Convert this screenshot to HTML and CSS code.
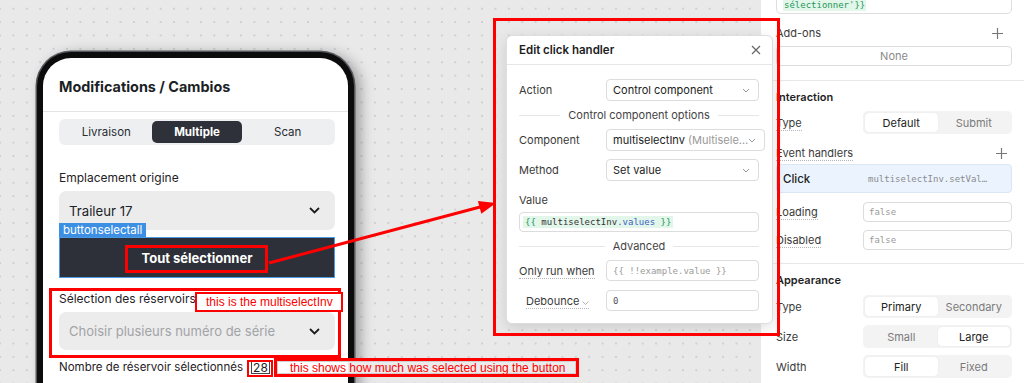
FILE: index.html
```html
<!DOCTYPE html>
<html lang="fr">
<head>
<meta charset="utf-8">
<title>Edit click handler</title>
<link rel="stylesheet" href="styles.css">
</head>
<body>
<div class="app">
  <main class="canvas">
    <div class="phone">
      <header class="app-header">Modifications / Cambios</header>
      <div class="app-body">
        <div class="seg">
          <span class="seg-item">Livraison</span>
          <span class="seg-item active">Multiple</span>
          <span class="seg-item">Scan</span>
        </div>
        <div class="field-label first">Emplacement origine</div>
        <div class="select"><span>Traileur 17</span><svg class="chev" width="11" height="7" viewBox="0 0 11 7"><path d="M1 1l4.5 4.5L10 1" fill="none" stroke="#1d1d1f" stroke-width="1.8"/></svg></div>
        <div class="btn-wrap">
          <span class="sel-tag">buttonselectall</span>
          <div class="btn-dark">Tout sélectionner</div>
        </div>
        <div class="field-label second">Sélection des réservoirs</div>
        <div class="select multi"><span>Choisir plusieurs numéro de série</span><svg class="chev" width="11" height="7" viewBox="0 0 11 7"><path d="M1 1l4.5 4.5L10 1" fill="none" stroke="#1d1d1f" stroke-width="1.8"/></svg></div>
        <div class="count-row"><span>Nombre de réservoir sélectionnés</span><span class="count">28</span></div>
      </div>
    </div>
  </main>

  <aside class="panel">
    <div class="code-box"><span class="code-hl">sélectionner'}}</span></div>
    <div class="p-head add">
      <span class="p-sub">Add-ons</span>
      <svg width="11" height="11" viewBox="0 0 11 11"><path d="M5.5 0v11M0 5.5h11" stroke="#777" stroke-width="1.2"/></svg>
    </div>
    <div class="none-box">None</div>
    <div class="p-sep"></div>
    <div class="p-title">Interaction</div>
    <div class="p-row r-type"><span class="p-label"><span class="dotted">Type</span></span><div class="p-seg"><span class="on">Default</span><span>Submit</span></div></div>
    <div class="p-head ev">
      <span class="p-label"><span class="dotted">Event handlers</span></span>
      <svg width="11" height="11" viewBox="0 0 11 11"><path d="M5.5 0v11M0 5.5h11" stroke="#777" stroke-width="1.2"/></svg>
    </div>
    <div class="handler"><span class="h-name">Click</span><span class="h-code">multiselectInv.setVal…</span></div>
    <div class="p-row r-load"><span class="p-label"><span class="dotted">Loading</span></span><div class="p-input">false</div></div>
    <div class="p-row r-dis"><span class="p-label"><span class="dotted">Disabled</span></span><div class="p-input">false</div></div>
    <div class="p-sep sep2"></div>
    <div class="p-title t2">Appearance</div>
    <div class="p-row r-seg"><span class="p-label">Type</span><div class="p-seg"><span class="on">Primary</span><span>Secondary</span></div></div>
    <div class="p-row r-seg"><span class="p-label">Size</span><div class="p-seg"><span>Small</span><span class="on">Large</span></div></div>
    <div class="p-row r-seg"><span class="p-label">Width</span><div class="p-seg"><span class="on">Fill</span><span>Fixed</span></div></div>
  </aside>

  <section class="modal">
    <header class="m-head">
      <span>Edit click handler</span>
      <svg width="10" height="10" viewBox="0 0 10 10"><path d="M1 1l8 8M9 1l-8 8" stroke="#666" stroke-width="1.2"/></svg>
    </header>
    <div class="m-body">
      <div class="m-row">
        <span class="m-label">Action</span>
        <div class="m-select"><span>Control component</span><svg width="8" height="5" viewBox="0 0 8 5"><path d="M1 1l3 3 3-3" fill="none" stroke="#9a9a9a" stroke-width="1"/></svg></div>
      </div>
      <div class="m-div"><span>Control component options</span></div>
      <div class="m-row">
        <span class="m-label">Component</span>
        <div class="m-select"><span>multiselectInv <em>(Multisele…</em></span><svg width="8" height="5" viewBox="0 0 8 5"><path d="M1 1l3 3 3-3" fill="none" stroke="#9a9a9a" stroke-width="1"/></svg></div>
      </div>
      <div class="m-row method">
        <span class="m-label">Method</span>
        <div class="m-select"><span>Set value</span><svg width="8" height="5" viewBox="0 0 8 5"><path d="M1 1l3 3 3-3" fill="none" stroke="#9a9a9a" stroke-width="1"/></svg></div>
      </div>
      <div class="m-vlabel">Value</div>
      <div class="m-code"><span class="hl"><span class="br">{{</span> multiselectInv<span class="prop">.values</span> <span class="br">}}</span></span></div>
      <div class="m-div adv"><span>Advanced</span></div>
      <div class="m-row m-small">
        <span class="m-label"><span class="dotted">Only run when</span></span>
        <div class="m-input ph">{{ !!example.value }}</div>
      </div>
      <div class="m-row m-small deb">
        <span class="m-label ind"><span class="dotted">Debounce <svg width="7" height="4" viewBox="0 0 7 4"><path d="M.5.5l3 3 3-3" fill="none" stroke="#aaa" stroke-width="0.9"/></svg></span></span>
        <div class="m-input">0</div>
      </div>
    </div>
  </section>

  <div class="anno a-modal"></div>
  <div class="anno a-btn"></div>
  <div class="anno a-multi"></div>
  <div class="anno a-count"></div>
  <div class="note n-multi">this is the multiselectInv</div>
  <div class="note n-count">this shows how much was selected using the button</div>
  <svg class="arrow" width="1024" height="383" viewBox="0 0 1024 383">
    <line x1="269" y1="263" x2="482" y2="206.5" stroke="#fe0000" stroke-width="3"/>
    <polygon points="496,203 477.9,201.1 481.3,213.7" fill="#fe0000"/>
  </svg>
</div>
</body>
</html>
```
FILE: styles.css
```css
* { box-sizing: border-box; margin: 0; padding: 0; }
html, body { width: 1024px; height: 383px; overflow: hidden; }
body { font-family: Inter, "Liberation Sans", sans-serif; background: #e9e9e9; color: #1f1f1f; }

.app { position: relative; display: flex; width: 1024px; height: 383px; overflow: hidden; }

/* canvas */
.canvas {
  position: relative; flex: none; width: 761px; height: 100%;
  background-color: #e9e9e9;
  background-image: radial-gradient(circle, #cacaca 0.6px, transparent 1.1px);
  background-size: 13.4px 13.4px;
  background-position: -6.7px 2px;
}

/* phone */
.phone {
  position: absolute; left: 37px; top: 52px; width: 317px; height: 360px;
  border: 6px solid #0c0c0d; border-bottom: none;
  border-radius: 34px 34px 0 0;
  background: #fff; overflow: hidden;
  box-shadow: 0 0 0 1.5px #55585d, 6px 2px 14px rgba(0,0,0,.35);
}
.app-header {
  height: 54px; padding: 4px 16px 0; display: flex; align-items: center;
  font-weight: 700; font-size: 14.4px; color: #1c1f26;
  border-bottom: 1px solid #e4e4e6;
}
.app-body { padding: 7px 13px 0 16px; }
.seg {
  display: grid; grid-template-columns: repeat(3, 1fr); height: 26px; padding: 2px;
  background: #eeeff1; border-radius: 6px;
}
.seg-item { display: flex; align-items: center; justify-content: center; font-size: 11.5px; color: #2a2d33; border-radius: 5px; }
.seg-item.active { background: #2e3139; color: #fff; font-weight: 700; }

.field-label { font-size: 12px; line-height: 16px; height: 16px; color: #1f2126; }
.field-label.first { margin-top: 25px; }
.field-label.second { margin-top: 13px; }
.select {
  height: 39px; margin-top: 5px; background: #ececed; border-radius: 7px;
  display: flex; align-items: center; justify-content: space-between;
  padding: 0 15px 0 10px; font-size: 13.2px; color: #202226;
}
.select.multi { height: 38px; color: #a2a3a6; font-size: 13px; }
.btn-wrap { position: relative; margin-top: 7px; }
.sel-tag {
  position: absolute; left: 0; top: -14px; height: 14px; padding: 0 4px;
  background: #3d8fe4; color: #fff; font-size: 11.5px; line-height: 14px;
}
.btn-dark {
  height: 41px; display: flex; align-items: center; justify-content: center;
  background: #2d3039; border: 1.5px solid #4a9be6; color: #fff;
  font-weight: 700; font-size: 13px;
}
.count-row { display: flex; align-items: center; gap: 8px; margin-top: 9px; font-size: 11.5px; color: #1f2126; height: 16px; }
.count { display: inline-flex; align-items: center; justify-content: center; width: 19px; height: 14px; border: 1px solid #444; background: #fff; font-size: 12px; }

/* right panel */
.panel { flex: 1; background: #fff; padding: 0 12px 0 15px; font-size: 11px; color: #333; }
.code-box {
  margin-top: -14px; height: 28px; border: 1px solid #dedede; border-radius: 5px;
  padding: 11px 6px 0; font-family: "DejaVu Sans Mono", monospace; font-size: 9px; line-height: 14px;
}
.code-hl { background: #e2f6ea; color: #27975a; padding: 1px 1px; }
.p-head { display: flex; align-items: center; justify-content: space-between; height: 16px; padding-right: 4px; }
.p-head.add { margin-top: 11px; padding-right: 9px; }
.p-head.ev { margin-top: 11px; padding-right: 5px; }
.p-sub { color: #3a3a3a; }
.none-box { margin-top: 5px; height: 20px; border: 1px solid #ddd; border-radius: 4px; display: flex; align-items: center; justify-content: center; color: #8a8a8a; }
.p-sep { height: 1px; background: #e8e8e8; margin: 14px -12px 0 -15px; }
.p-sep.sep2 { margin-top: 13px; }
.p-title { margin-top: 8px; height: 16px; line-height: 16px; font-weight: 600; color: #1f1f1f; }
.p-row { display: flex; align-items: center; }
.p-label { width: 87px; flex: none; color: #3a3a3a; }
.dotted { border-bottom: 1px dotted #b5b5b5; }
.r-type { margin-top: 6px; }
.p-seg { width: 149px; height: 23px; background: #f3f3f4; border-radius: 5px; padding: 2px; display: grid; grid-template-columns: 1fr 1fr; }
.p-seg span { display: flex; align-items: center; justify-content: center; color: #7a7a7a; border-radius: 4px; }
.p-seg .on { background: #fff; color: #222; box-shadow: 0 0 1px rgba(0,0,0,.12); }
.handler { margin-top: 3px; height: 29px; background: #eaf3fe; border: 1px solid #dae6f5; border-radius: 4px; display: flex; align-items: center; padding: 0 6px; }
.h-name { width: 85px; flex: none; color: #222; font-weight: 500; font-size: 11.5px; }
.h-code { font-family: "DejaVu Sans Mono", monospace; font-size: 9px; color: #8c8c8c; }
.p-input { width: 149px; height: 20px; border: 1px solid #dcdcdc; border-radius: 4px; padding-left: 5px; display: flex; align-items: center; font-family: "DejaVu Sans Mono", monospace; font-size: 9px; color: #9a9a9a; }
.r-load { margin-top: 9px; }
.r-dis { margin-top: 8px; }
.p-title.t2 { margin-top: 8px; }
.r-seg { margin-top: 7px; }

/* modal */
.modal {
  position: absolute; left: 506px; top: 35px; width: 267px; height: 289px;
  background: #fff; border: 1px solid #dedede; border-radius: 6px;
  box-shadow: 0 4px 14px rgba(0,0,0,.12); font-size: 11px; color: #333;
}
.m-head { height: 29px; border-bottom: 1px solid #e6e6e6; display: flex; align-items: center; justify-content: space-between; padding: 0 11px 0 12px; font-weight: 600; color: #1d1d1d; font-size: 11.5px; }
.m-body { padding: 14px 13px 0 12px; }
.m-row { display: flex; align-items: center; height: 22px; }
.m-row.method { margin-top: 8px; }
.m-label { width: 87px; flex: none; color: #3a3a3a; }
.m-label.ind { padding-left: 7px; }
.m-select { flex: 1; height: 22px; border: 1px solid #dcdcdc; border-radius: 4px; padding: 0 8px 0 6px; display: flex; align-items: center; justify-content: space-between; color: #222; white-space: nowrap; }
.m-select em { font-style: normal; color: #999; }
.m-div { display: flex; align-items: center; height: 14px; margin: 7px 0; color: #444; }
.m-div::before, .m-div::after { content: ""; flex: 1; height: 1px; background: #e6e6e6; }
.m-div span { padding: 0 8px; }
.m-vlabel { margin-top: 12px; height: 14px; line-height: 14px; color: #3a3a3a; }
.m-code { margin-top: 5px; height: 20px; border: 1px solid #dcdcdc; border-radius: 4px; padding: 0 3px; display: flex; align-items: center; font-family: "DejaVu Sans Mono", monospace; font-size: 9px; color: #333; }
.m-code .hl { background: #e2f6ea; padding: 1px 2px; }
.m-code .br { color: #27975a; }
.m-code .prop { color: #3d62c4; }
.m-small { height: 21px; }
.m-row.deb { margin-top: 9px; }
.m-input { flex: 1; height: 21px; border: 1px solid #dcdcdc; border-radius: 4px; padding-left: 6px; display: flex; align-items: center; font-family: "DejaVu Sans Mono", monospace; font-size: 9px; color: #555; }
.m-input.ph { color: #9a9a9a; }

/* annotations */
.anno { position: absolute; border: 3px solid #fe0000; }
.a-modal { left: 493px; top: 18px; width: 287px; height: 318px; }
.a-btn { left: 125px; top: 245px; width: 143px; height: 28px; }
.a-multi { left: 49px; top: 288px; width: 292px; height: 70px; }
.a-count { left: 247px; top: 360px; width: 26px; height: 17px; border-width: 2.5px; }
.note { position: absolute; font-family: "Liberation Sans", Arial, sans-serif; font-size: 12px; color: #fe0000; display: flex; align-items: center; }
.n-multi { left: 195px; top: 292px; width: 148px; height: 20px; background: #fff; border: 2px solid #fe0000; padding-left: 9px; }
.n-count { left: 274px; top: 358px; width: 305px; height: 19px; border: 3px solid #fe0000; padding-left: 13px; background: linear-gradient(to right, #fff 71px, #ebebeb 71px); box-shadow: inset 0 0 0 1px #cfcfcf; }
.arrow { position: absolute; left: 0; top: 0; pointer-events: none; }
```
